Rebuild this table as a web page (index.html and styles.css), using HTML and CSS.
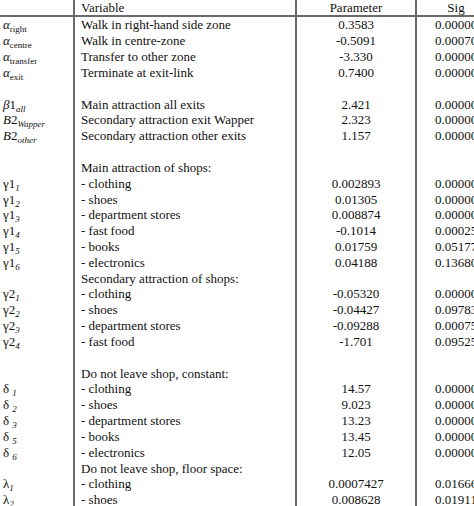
FILE: index.html
```html
<!DOCTYPE html>
<html>
<head>
<meta charset="utf-8">
<link rel="stylesheet" href="styles.css">
</head>
<body>
<table class="t">
<colgroup><col class="c1"><col class="c2"><col class="c3"><col class="c4"></colgroup>
<thead>
<tr class="hd"><th class="sym"></th><th class="txt">Variable</th><th class="num">Parameter</th><th class="sig">Sig</th></tr>
</thead>
<tbody>
<tr><td class="sym"><span class="g">α</span><sub class="up">right</sub></td><td class="txt">Walk in right-hand side zone</td><td class="num">0.3583</td><td class="sig">0.00000</td></tr>
<tr><td class="sym"><span class="g">α</span><sub class="up">centre</sub></td><td class="txt">Walk in centre-zone</td><td class="num">-0.5091</td><td class="sig">0.00070</td></tr>
<tr><td class="sym"><span class="g">α</span><sub class="up">transfer</sub></td><td class="txt">Transfer to other zone</td><td class="num">-3.330</td><td class="sig">0.00000</td></tr>
<tr><td class="sym"><span class="g">α</span><sub class="up">exit</sub></td><td class="txt">Terminate at exit-link</td><td class="num">0.7400</td><td class="sig">0.00000</td></tr>
<tr><td class="sym"></td><td class="txt"></td><td class="num"></td><td class="sig"></td></tr>
<tr><td class="sym"><i class="b">β</i>1<sub>all</sub></td><td class="txt">Main attraction all exits</td><td class="num">2.421</td><td class="sig">0.00000</td></tr>
<tr><td class="sym"><i class="b">B</i>2<sub>Wapper</sub></td><td class="txt">Secondary attraction exit Wapper</td><td class="num">2.323</td><td class="sig">0.00000</td></tr>
<tr><td class="sym"><i class="b">B</i>2<sub>other</sub></td><td class="txt">Secondary attraction other exits</td><td class="num">1.157</td><td class="sig">0.00000</td></tr>
<tr><td class="sym"></td><td class="txt"></td><td class="num"></td><td class="sig"></td></tr>
<tr><td class="sym"></td><td class="txt">Main attraction of shops:</td><td class="num"></td><td class="sig"></td></tr>
<tr><td class="sym">γ1<sub>1</sub></td><td class="txt">- clothing</td><td class="num">0.002893</td><td class="sig">0.00000</td></tr>
<tr><td class="sym">γ1<sub>2</sub></td><td class="txt">- shoes</td><td class="num">0.01305</td><td class="sig">0.00000</td></tr>
<tr><td class="sym">γ1<sub>3</sub></td><td class="txt">- department stores</td><td class="num">0.008874</td><td class="sig">0.00000</td></tr>
<tr><td class="sym">γ1<sub>4</sub></td><td class="txt">- fast food</td><td class="num">-0.1014</td><td class="sig">0.00025</td></tr>
<tr><td class="sym">γ1<sub>5</sub></td><td class="txt">- books</td><td class="num">0.01759</td><td class="sig">0.05177</td></tr>
<tr><td class="sym">γ1<sub>6</sub></td><td class="txt">- electronics</td><td class="num">0.04188</td><td class="sig">0.13680</td></tr>
<tr><td class="sym"></td><td class="txt">Secondary attraction of shops:</td><td class="num"></td><td class="sig"></td></tr>
<tr><td class="sym">γ2<sub>1</sub></td><td class="txt">- clothing</td><td class="num">-0.05320</td><td class="sig">0.00000</td></tr>
<tr><td class="sym">γ2<sub>2</sub></td><td class="txt">- shoes</td><td class="num">-0.04427</td><td class="sig">0.09783</td></tr>
<tr><td class="sym">γ2<sub>3</sub></td><td class="txt">- department stores</td><td class="num">-0.09288</td><td class="sig">0.00075</td></tr>
<tr><td class="sym">γ2<sub>4</sub></td><td class="txt">- fast food</td><td class="num">-1.701</td><td class="sig">0.09525</td></tr>
<tr><td class="sym"></td><td class="txt"></td><td class="num"></td><td class="sig"></td></tr>
<tr><td class="sym"></td><td class="txt">Do not leave shop, constant:</td><td class="num"></td><td class="sig"></td></tr>
<tr><td class="sym">δ<sub class="sp">1</sub></td><td class="txt">- clothing</td><td class="num">14.57</td><td class="sig">0.00000</td></tr>
<tr><td class="sym">δ<sub class="sp">2</sub></td><td class="txt">- shoes</td><td class="num">9.023</td><td class="sig">0.00000</td></tr>
<tr><td class="sym">δ<sub class="sp">3</sub></td><td class="txt">- department stores</td><td class="num">13.23</td><td class="sig">0.00000</td></tr>
<tr><td class="sym">δ<sub class="sp">5</sub></td><td class="txt">- books</td><td class="num">13.45</td><td class="sig">0.00000</td></tr>
<tr><td class="sym">δ<sub class="sp">6</sub></td><td class="txt">- electronics</td><td class="num">12.05</td><td class="sig">0.00000</td></tr>
<tr><td class="sym"></td><td class="txt">Do not leave shop, floor space:</td><td class="num"></td><td class="sig"></td></tr>
<tr><td class="sym">λ<sub>1</sub></td><td class="txt">- clothing</td><td class="num">0.0007427</td><td class="sig">0.01666</td></tr>
<tr class="last"><td class="sym">λ<sub>2</sub></td><td class="txt">- shoes</td><td class="num">0.008628</td><td class="sig">0.01911</td></tr>
</tbody>
</table>
</body>
</html>
```

FILE: styles.css
```css
html, body {
  margin: 0;
  padding: 0;
  background: #ffffff;
  overflow: hidden;
}
body {
  font-family: "Liberation Serif", "Times New Roman", serif;
  font-size: 13px;
  color: #111111;
}
.t {
  border-collapse: separate;
  border-spacing: 0;
  table-layout: fixed;
  width: 495px;
}
.c1 { width: 73px; }
.c2 { width: 222px; }
.c3 { width: 120px; }
.c4 { width: 80px; }
.t th,
.t td {
  padding: 0;
  height: 15.83px;
  line-height: 15px;
  font-weight: normal;
  white-space: nowrap;
  vertical-align: middle;
  box-sizing: border-box;
}
.t th {
  height: 15px;
  border-bottom: 2px solid #6a6a6a;
}
.t .txt,
.t .num,
.t .sig {
  border-left: 2px solid #6a6a6a;
}
.t .txt {
  text-align: left;
  padding-left: 6px;
}
.t .num {
  text-align: center;
}
.t .sig {
  text-align: center;
  overflow: hidden;
}
.t .sym {
  padding-left: 3px;
}
.last td {
  border-bottom: 2px solid #8a8a8a;
}
.g {
  font-style: italic;
}
.b {
  font-style: italic;
}
sub {
  font-size: 9px;
  font-style: italic;
  vertical-align: -3px;
  line-height: 0;
}
sub.up {
  font-style: normal;
}
sub.sp {
  padding-left: 3px;
}
```
